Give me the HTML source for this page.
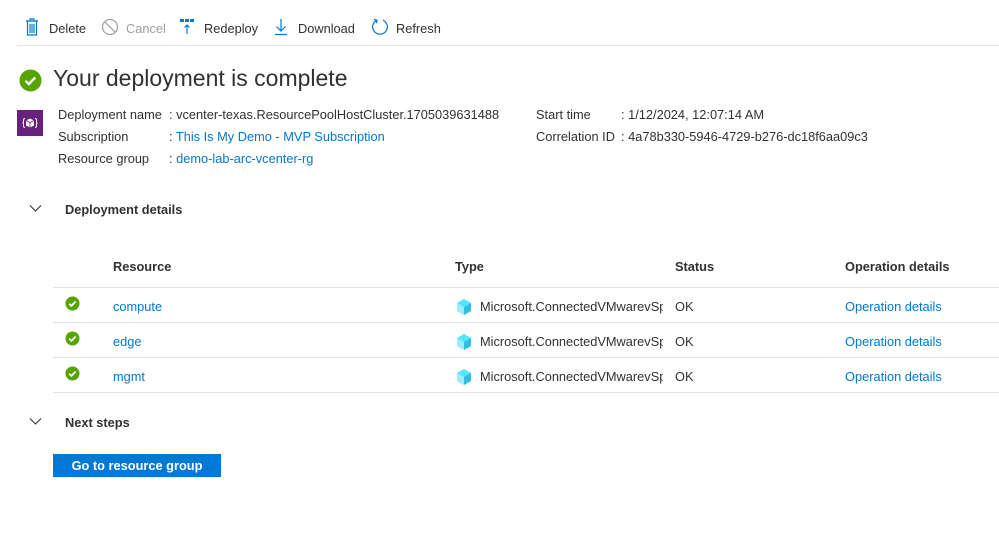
<!DOCTYPE html>
<html><head><meta charset="utf-8"><style>
*{margin:0;padding:0;box-sizing:border-box}
body{width:999px;height:552px;background:#fff;font-family:"Liberation Sans",sans-serif;font-size:12.8px;color:#323130;position:relative;overflow:hidden}
.a{position:absolute;white-space:nowrap}
.l{color:#0078d4}
.b{font-weight:600}
.hr{position:absolute;height:1px;background:#e6e4e2}
.chk{position:absolute;width:15px;height:15px}
.cube{position:absolute;width:16px;height:16px}
</style></head><body>
<svg class="a" style="left:25px;top:18px" width="14" height="18" viewBox="0 0 14 18"><path d="M1 3h12M5 3V1h4v2M2.5 3v14h9V3M5 6v9M7 6v9M9 6v9" fill="none" stroke="#0078d4" stroke-width="1.2"/></svg>
<div class="a" style="left:49px;top:21px">Delete</div>
<svg class="a" style="left:101px;top:18px" width="18" height="18" viewBox="0 0 18 18"><circle cx="9" cy="9" r="7.5" fill="none" stroke="#a19f9d" stroke-width="1.2"/><path d="M3.8 3.8L14.2 14.2" stroke="#a19f9d" stroke-width="1.2"/></svg>
<div class="a" style="left:126px;top:21px;color:#a19f9d">Cancel</div>
<svg class="a" style="left:180px;top:19px" width="16" height="16" viewBox="0 0 16 16"><rect x="0" y="0" width="4" height="3" fill="#0078d4"/><rect x="5" y="0" width="4" height="3" fill="#0078d4"/><rect x="10" y="0" width="4" height="3" fill="#0078d4"/><path d="M7 15V6M4.5 8.5L7 6l2.5 2.5" fill="none" stroke="#0078d4" stroke-width="1.2"/></svg>
<div class="a" style="left:204px;top:21px">Redeploy</div>
<svg class="a" style="left:274px;top:18px" width="14" height="18" viewBox="0 0 14 18"><path d="M7 1v12M2.5 8.5L7 13l4.5-4.5M1 16.5h12" fill="none" stroke="#0078d4" stroke-width="1.2"/></svg>
<div class="a" style="left:298px;top:21px">Download</div>
<svg class="a" style="left:371px;top:18px" width="18" height="18" viewBox="0 0 18 18"><path d="M12 2.2A7.3 7.3 0 1 1 6 2.2M3 1.5l3 .7-.7 3" fill="none" stroke="#0078d4" stroke-width="1.2"/></svg>
<div class="a" style="left:396px;top:21px">Refresh</div>
<div class="hr" style="left:17px;top:45px;width:982px"></div>
<svg class="a" style="left:19px;top:69px" width="23" height="23" viewBox="0 0 23 23"><circle cx="11.5" cy="11.5" r="11" fill="#57a300"/><path d="M6.5 11.8l3.3 3.3 6.5-6.6" fill="none" stroke="#fff" stroke-width="2.4"/></svg>
<div class="a" style="left:53px;top:65px;font-size:23px;color:#323130">Your deployment is complete</div>
<svg class="a" style="left:17px;top:110px" width="26" height="26" viewBox="0 0 26 26"><rect width="26" height="26" fill="#68217a"/><path d="M8 8.5q-1.5 0-1.5 1.5v1.5q0 1.5-1 1.5 1 0 1 1.5V16q0 1.5 1.5 1.5M18 8.5q1.5 0 1.5 1.5v1.5q0 1.5 1 1.5-1 0-1 1.5V16q0 1.5-1.5 1.5" fill="none" stroke="#fff" stroke-width="1"/><path d="M13 8.5l4 2v5l-4 2-4-2v-5z" fill="#fff"/><path d="M9 10.5l4 2 4-2M13 12.5v5" stroke="#68217a" stroke-width=".8" fill="none"/></svg>
<div class="a" style="left:58px;top:107px">Deployment name</div>
<div class="a" style="left:169px;top:107px">: vcenter-texas.ResourcePoolHostCluster.1705039631488</div>
<div class="a" style="left:58px;top:129px">Subscription</div>
<div class="a" style="left:169px;top:129px">: <span class="l">This Is My Demo - MVP Subscription</span></div>
<div class="a" style="left:58px;top:151px">Resource group</div>
<div class="a" style="left:169px;top:151px">: <span class="l">demo-lab-arc-vcenter-rg</span></div>
<div class="a" style="left:536px;top:107px">Start time</div>
<div class="a" style="left:621px;top:107px">: 1/12/2024, 12:07:14 AM</div>
<div class="a" style="left:536px;top:129px">Correlation ID</div>
<div class="a" style="left:621px;top:129px">: 4a78b330-5946-4729-b276-dc18f6aa09c3</div>
<svg class="a" style="left:29px;top:204px" width="13" height="9" viewBox="0 0 13 9"><path d="M1 1.5l5.5 5.5 5.5-5.5" fill="none" stroke="#323130" stroke-width="1.1"/></svg>
<div class="a b" style="left:65px;top:202px">Deployment details</div>
<div class="a b" style="left:113px;top:259px">Resource</div>
<div class="a b" style="left:455px;top:259px">Type</div>
<div class="a b" style="left:675px;top:259px">Status</div>
<div class="a b" style="left:845px;top:259px">Operation details</div>
<div class="hr" style="left:53px;top:287px;width:946px"></div>
<div class="hr" style="left:53px;top:322px;width:946px"></div>
<div class="hr" style="left:53px;top:357px;width:946px"></div>
<div class="hr" style="left:53px;top:392px;width:946px"></div>
<svg class="chk" style="left:65px;top:296px" viewBox="0 0 15 15"><circle cx="7.5" cy="7.5" r="7" fill="#57a300"/><path d="M4.2 7.7l2.2 2.2 4.3-4.4" fill="none" stroke="#fff" stroke-width="1.8"/></svg>
<svg class="chk" style="left:65px;top:331px" viewBox="0 0 15 15"><circle cx="7.5" cy="7.5" r="7" fill="#57a300"/><path d="M4.2 7.7l2.2 2.2 4.3-4.4" fill="none" stroke="#fff" stroke-width="1.8"/></svg>
<svg class="chk" style="left:65px;top:366px" viewBox="0 0 15 15"><circle cx="7.5" cy="7.5" r="7" fill="#57a300"/><path d="M4.2 7.7l2.2 2.2 4.3-4.4" fill="none" stroke="#fff" stroke-width="1.8"/></svg>
<div class="a l" style="left:113px;top:299px">compute</div>
<div class="a l" style="left:113px;top:334px">edge</div>
<div class="a l" style="left:113px;top:369px">mgmt</div>
<svg class="cube" style="left:456px;top:299px" viewBox="0 0 16 16"><path d="M8 0l7 4v8l-7 4-7-4V4z" fill="#50e6ff"/><path d="M8 8l7-4v8l-7 4z" fill="#32bedd"/><path d="M1 4l7 4v8L1 12z" fill="#9cebff"/></svg>
<svg class="cube" style="left:456px;top:334px" viewBox="0 0 16 16"><path d="M8 0l7 4v8l-7 4-7-4V4z" fill="#50e6ff"/><path d="M8 8l7-4v8l-7 4z" fill="#32bedd"/><path d="M1 4l7 4v8L1 12z" fill="#9cebff"/></svg>
<svg class="cube" style="left:456px;top:369px" viewBox="0 0 16 16"><path d="M8 0l7 4v8l-7 4-7-4V4z" fill="#50e6ff"/><path d="M8 8l7-4v8l-7 4z" fill="#32bedd"/><path d="M1 4l7 4v8L1 12z" fill="#9cebff"/></svg>
<div class="a" style="left:480px;top:299px;width:183px;overflow:hidden">Microsoft.ConnectedVMwarevSphere</div>
<div class="a" style="left:480px;top:334px;width:183px;overflow:hidden">Microsoft.ConnectedVMwarevSphere</div>
<div class="a" style="left:480px;top:369px;width:183px;overflow:hidden">Microsoft.ConnectedVMwarevSphere</div>
<div class="a" style="left:675px;top:299px">OK</div>
<div class="a" style="left:675px;top:334px">OK</div>
<div class="a" style="left:675px;top:369px">OK</div>
<div class="a l" style="left:845px;top:299px">Operation details</div>
<div class="a l" style="left:845px;top:334px">Operation details</div>
<div class="a l" style="left:845px;top:369px">Operation details</div>
<svg class="a" style="left:29px;top:417px" width="13" height="9" viewBox="0 0 13 9"><path d="M1 1.5l5.5 5.5 5.5-5.5" fill="none" stroke="#323130" stroke-width="1.1"/></svg>
<div class="a b" style="left:65px;top:415px">Next steps</div>
<div class="a b" style="left:53px;top:454px;width:168px;height:23px;background:#0078d4;color:#fff;text-align:center;line-height:23px">Go to resource group</div>
</body></html>
